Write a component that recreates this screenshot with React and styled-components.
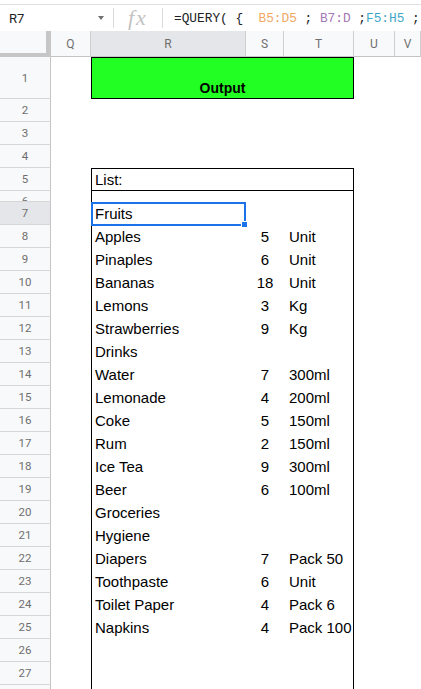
import React from "react";
import styled, { createGlobalStyle } from "styled-components";

const GlobalStyle = createGlobalStyle`
  html, body {
    margin: 0;
    padding: 0;
    background: #fff;
    overflow: hidden;
  }
  * { box-sizing: border-box; }
`;

const COLS = "51px 40px 155px 38px 70px 41px 1fr";

const Page = styled.div`
  width: 421px;
  height: 689px;
  overflow: hidden;
  font-family: "Liberation Sans", Arial, sans-serif;
  color: #000;
`;

const TopStrip = styled.div`
  height: 5px;
  border-bottom: 1px solid #e0e0e0;
`;

// formula bar
const FormulaBar = styled.div`
  height: 26px;
  display: flex;
  align-items: center;
  background: #fff;
`;

const NameBox = styled.div`
  width: 113px;
  display: flex;
  align-items: center;
  padding-left: 9px;
  font-family: Roboto, "Liberation Sans", sans-serif;
  font-size: 13px;
  color: #202124;
`;

const Caret = styled.span`
  margin-left: auto;
  margin-right: 9px;
  width: 0;
  height: 0;
  border-left: 3.5px solid transparent;
  border-right: 3.5px solid transparent;
  border-top: 4px solid #707070;
`;

const Divider = styled.span`
  width: 1px;
  height: 20px;
  background: #dadada;
`;

const Fx = styled.span`
  width: 48px;
  padding-left: 14px;
  font-family: "Liberation Serif", "Times New Roman", serif;
  font-style: italic;
  font-size: 22px;
  letter-spacing: 2px;
  color: #c2c2c2;
  line-height: 26px;
`;

const Formula = styled.div`
  flex: 1;
  padding-left: 11px;
  font-family: "Liberation Mono", "Courier New", monospace;
  font-size: 12.8px;
  color: #202124;
  white-space: pre;
  overflow: hidden;
`;

const Ref = styled.span`
  color: ${p => p.$color};
`;

// column headers
const HeaderRow = styled.div`
  display: grid;
  grid-template-columns: ${COLS};
  height: 26px;
  background: #f8f9fa;
`;

const Corner = styled.div`
  background: #f8f9fa;
  border-right: 5px solid #c6c6c6;
  border-bottom: 4px solid #c6c6c6;
`;

const ColHead = styled.div`
  display: flex;
  align-items: center;
  justify-content: center;
  font-family: Roboto, "Liberation Sans", sans-serif;
  font-size: 12px;
  color: #6f6f6f;
  background: ${p => (p.$active ? "#e4e6e9" : "#f8f9fa")};
  border-right: 1px solid #cfcfcf;
  border-bottom: 1px solid #c4c4c4;
`;

// sheet body
const Body = styled.div`
  display: grid;
  grid-template-columns: ${COLS};
  grid-template-rows: 42px repeat(4, 23px) 11px repeat(22, 23px);
`;

const RowHead = styled.div`
  grid-column: 1;
  grid-row: ${p => p.$row};
  overflow: hidden;
  text-align: center;
  font-family: Roboto, "Liberation Sans", sans-serif;
  font-size: 11.5px;
  color: #6f6f6f;
  background: ${p => (p.$active ? "#e4e6e9" : "#f8f9fa")};
  border-right: 1px solid #c4c4c4;
  border-bottom: 1px solid #d6d6d6;
  line-height: ${p => (p.$short ? "21px" : "inherit")};
  display: ${p => (p.$short ? "block" : "flex")};
  align-items: center;
  justify-content: center;
`;

const OutputBox = styled.div`
  grid-column: 3 / 6;
  grid-row: 1;
  background: #22ff22;
  border: 1px solid #000;
  display: flex;
  align-items: flex-end;
  justify-content: center;
  padding-bottom: 1px;
  font-weight: bold;
  font-size: 14px;
  line-height: 17px;
`;

const ListBox = styled.div`
  grid-column: 3 / 6;
  grid-row: 5 / -1;
  border: 1px solid #000;
  border-bottom: none;
  display: flex;
  flex-direction: column;
  font-size: 15px;
`;

const ListHead = styled.div`
  height: 22px;
  line-height: 22px;
  padding-left: 3px;
  border-bottom: 1px solid #000;
`;

const Gap = styled.div`
  height: 11px;
`;

const Item = styled.div`
  display: grid;
  grid-template-columns: 154px 38px 1fr;
  height: 23px;
  line-height: 24px;
  white-space: nowrap;
`;

const Name = styled.div`
  position: relative;
  padding-left: 3px;
`;

const Qty = styled.div`
  text-align: center;
`;

const Unit = styled.div`
  padding-left: 5px;
`;

const Selection = styled.div`
  position: absolute;
  left: -1px;
  top: 0;
  right: 0;
  bottom: 0;
  border: 2px solid #1a73e8;
  pointer-events: none;
`;

const Handle = styled.div`
  position: absolute;
  right: -4px;
  bottom: -4px;
  width: 7px;
  height: 7px;
  background: #1a73e8;
  border: 1px solid #fff;
`;

const items = [
  ["Fruits"],
  ["Apples", 5, "Unit"],
  ["Pinaples", 6, "Unit"],
  ["Bananas", 18, "Unit"],
  ["Lemons", 3, "Kg"],
  ["Strawberries", 9, "Kg"],
  ["Drinks"],
  ["Water", 7, "300ml"],
  ["Lemonade", 4, "200ml"],
  ["Coke", 5, "150ml"],
  ["Rum", 2, "150ml"],
  ["Ice Tea", 9, "300ml"],
  ["Beer", 6, "100ml"],
  ["Groceries"],
  ["Hygiene"],
  ["Diapers", 7, "Pack 50"],
  ["Toothpaste", 6, "Unit"],
  ["Toilet Paper", 4, "Pack 6"],
  ["Napkins", 4, "Pack 100"],
];

const columns = ["Q", "R", "S", "T", "U", "V"];
const rowNumbers = Array.from({ length: 28 }, (_, i) => i + 1);

export default function App() {
  return (
    <Page>
      <GlobalStyle />
      <TopStrip />
      <FormulaBar>
        <NameBox>
          R7
          <Caret />
        </NameBox>
        <Divider />
        <Fx>fx</Fx>
        <Divider />
        <Formula>
          {"=QUERY( {  "}
          <Ref $color="#f0a862">B5:D5</Ref>
          {" ; "}
          <Ref $color="#a678b4">B7:D</Ref>
          {" ;"}
          <Ref $color="#3fa8c8">F5:H5</Ref>
          {" ; "}
          <Ref $color="#6aa84f">F7:H</Ref>
          {" }; \"select *\")"}
        </Formula>
      </FormulaBar>

      <HeaderRow>
        <Corner />
        {columns.map(c => (
          <ColHead key={c} $active={c === "R"}>
            {c}
          </ColHead>
        ))}
      </HeaderRow>

      <Body>
        {rowNumbers.map(n => (
          <RowHead key={n} $row={n} $active={n === 7} $short={n === 6}>
            {n}
          </RowHead>
        ))}

        <OutputBox>Output</OutputBox>

        <ListBox>
          <ListHead>List:</ListHead>
          <Gap />
          {items.map(([name, qty, unit], i) => (
            <Item key={name}>
              <Name>
                {name}
                {i === 0 && (
                  <Selection>
                    <Handle />
                  </Selection>
                )}
              </Name>
              <Qty>{qty}</Qty>
              <Unit>{unit}</Unit>
            </Item>
          ))}
        </ListBox>
      </Body>
    </Page>
  );
}
